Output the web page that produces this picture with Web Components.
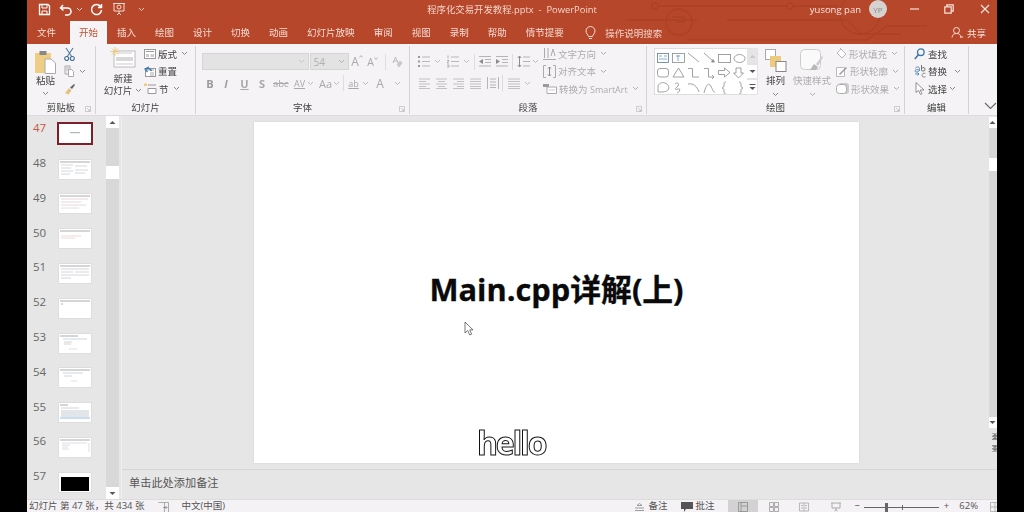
<!DOCTYPE html>
<html lang="zh-CN">
<head>
<meta charset="utf-8">
<title>PowerPoint</title>
<style>
  html, body { margin: 0; height: 100%; background: #000; overflow: hidden; }
  body { font-family: "Open Sans", "Noto Sans CJK SC", sans-serif; }
</style>
</head>
<body>
<ppt-app></ppt-app>

<script>
// name: [width, height, svg inner]
const ICONS = {
  chev: [7, 5, `<path d="M1 1l2.5 2.5L6 1" fill="none" stroke="currentColor"/>`],
  caret: [4, 3, `<path d="M.5 2.500L2 .5l1.500 2" fill="none" stroke="#aaa" stroke-width=".800"/>`],
  save: [13, 13, `<path d="M1.5 1.5h8.5l1.500 1.500v8.500h-10z" fill="none" stroke="#fff" stroke-width="1.300"/><path d="M4 2v3h5V2M4 11.500V8h5v3.500" fill="none" stroke="#fff"/>`],
  undo: [14, 13, `<path d="M4 2L1.500 5 4.500 7.500M2 5h6a3.500 3.500 0 0 1 1 7H6" fill="none" stroke="#fff" stroke-width="1.500"/>`],
  redo: [13, 13, `<path d="M10.500 3.500A5 5 0 1 0 11.500 7M11.500 1v3.500H8" fill="none" stroke="#fff" stroke-width="1.500"/>`],
  show: [14, 14, `<path d="M1 1.500h12M2 1.500v7.500h10V1.500M7 9v2M5 13l2-2 2 2" fill="none" stroke="#f4dcd4"/><circle cx="7" cy="5" r="2" fill="none" stroke="#f4dcd4"/>`],
  bulb: [11, 14, `<path d="M3.500 10.500C3 8.500 1 7.500 1 5a4.500 4.500 0 0 1 9 0c0 2.500-2 3.500-2.500 5.500zM4 12.500h3" fill="none" stroke="#f4dcd4"/>`],
  share: [12, 13, `<circle cx="5.500" cy="4.500" r="3" fill="none" stroke="#f4dcd4"/><path d="M1 11.500c.5-3 2-4 4.500-4s4 1 4.500 4M9 11h3" fill="none" stroke="#f4dcd4"/>`],
  min: [10, 10, `<path d="M0 5h9" stroke="#f6e3dc" stroke-width="1.200"/>`],
  restore: [10, 10, `<path d="M.8 2.800h6.400v6.400H.8zM2.800 2.500V.8h6.400v6.400H7.500" fill="none" stroke="#f6e3dc" stroke-width="1.200"/>`],
  close: [10, 10, `<path d="M1 1l8 8M9 1L1 9" stroke="#f6e3dc" stroke-width="1.200"/>`],
  paste: [23, 24, `<rect x="1" y="3" width="16" height="20" fill="#efcd83"/><rect x="5.500" y="1" width="7" height="4" fill="#888"/><path d="M11 9h6l4.500 4v10.500H11z" fill="#fff" stroke="#aaa"/>`],
  cut: [11, 14, `<path d="M2 1l6 9M9 1l-6 9" stroke="#54789a" stroke-width="1.100"/><circle cx="2.700" cy="11.500" r="2" fill="none" stroke="#3f6d95" stroke-width="1.100"/><circle cx="8.300" cy="11.500" r="2" fill="none" stroke="#3f6d95" stroke-width="1.100"/>`],
  copy: [11, 12, `<path d="M1 1h5v8H1z" fill="#eee" stroke="#aaa"/><path d="M4.500 4.500h3l2 2v5h-5z" fill="#fff" stroke="#aaa"/><path d="M2 3h3M2 5h2" stroke="#bbb"/>`],
  brush: [12, 12, `<path d="M1 10l4-5 2.500 2.500-3 4z" fill="#e4c27a"/><path d="M6 4.500L10 1l1 1-3 4z" fill="#666"/>`],
  newslide: [26, 21, `<rect x="4" y="4" width="21" height="16" fill="#fff" stroke="#bbb"/><rect x="6" y="10" width="17" height="4" fill="#d8d8d8"/><path d="M7 6h15M6 17h17" stroke="#ccc"/><path d="M5 0v9M.5 4.500h9M2 1.500l6 6M8 1.500l-6 6" stroke="#eccb7e"/>`],
  layout: [12, 10, `<rect x=".5" y=".5" width="11" height="9" fill="#fff" stroke="#999"/><path d="M2 2.500h8" stroke="#999"/><path d="M2 5h3v3H2zM6.500 5H10v3H6.500z" fill="#ccc"/>`],
  reset: [12, 11, `<rect x="1.500" y="2.500" width="10" height="8" fill="#fff" stroke="#999"/><path d="M3 4h7M6 7h4M6 9h4" stroke="#aaa"/><path d="M5 1L1 3l2.500 3M2 3c2.500-1 5 0 5.500 2" fill="none" stroke="#3a76a8" stroke-width="1.200"/>`],
  section: [13, 11, `<path d="M0 .5h3v2.500H0z" fill="#eccb7e"/><path d="M4 2h8M4 5.500h8v5H4z" fill="#fff" stroke="#999"/>`],
  clear: [11, 12, `<path d="M1 7L3.500 1 6 7M2 5h3" fill="none" stroke="#bbb"/><path d="M5 8l3-3.500 2.500 2.500L7.500 11H6z" fill="#c8c8c8"/>`],
  dialog: [6, 6, `<path d="M.5 5.500V.5h5v5zM2 2l3 3M5 3v2H3" fill="none" stroke="#bbb" stroke-width=".700"/>`],
  bullets: [12, 13, `<path d="M4 2h8M4 6.500h8M4 11h8" stroke="#b9b9b9"/><path d="M0 1h2v2H0zM0 5.500h2v2H0zM0 10h2v2H0z" fill="#999"/>`],
  numbers: [12, 13, `<path d="M4 2h8M4 6.500h8M4 11h8" stroke="#b9b9b9"/><path d="M1 .5v3M0 5.500h2L0 8h2M0 10h2v2H0" stroke="#999" fill="none" stroke-width=".700"/>`],
  outdent: [12, 11, `<path d="M0 .5h12M6 3.500h6M6 6.500h6M0 10h12" stroke="#b5b5b5"/><path d="M4 3v5L0 5.500z" fill="#8c8c8c"/>`],
  indent: [12, 11, `<path d="M0 .5h12M6 3.500h6M6 6.500h6M0 10h12" stroke="#b5b5b5"/><path d="M0 3v5l4-2.500z" fill="#8c8c8c"/>`],
  spacing: [13, 13, `<path d="M6 2h7M6 6.500h7M6 11h7" stroke="#b5b5b5"/><path d="M2.500 1v11M.8 3l1.700-2 1.700 2M.8 10l1.700 2 1.700-2" fill="none" stroke="#8c8c8c"/>`],
  aleft: [11, 11, `<path d="M0 1h11M0 3.500h7M0 6h11M0 8.500h7M0 10.500h11" stroke="#c2c2c2"/>`],
  acenter: [11, 11, `<path d="M0 1h11M2 3.500h7M0 6h11M2 8.500h7M0 10.500h11" stroke="#c2c2c2"/>`],
  aright: [11, 11, `<path d="M0 1h11M4 3.500h7M0 6h11M4 8.500h7M0 10.500h11" stroke="#c2c2c2"/>`],
  ajust: [11, 11, `<path d="M0 1h11M0 3.500h11M0 6h11M0 8.500h11M0 10.500h11" stroke="#c2c2c2"/>`],
  adist: [12, 12, `<path d="M.5 0v12M11.500 0v12M3 2h6M3 5h6M3 8h6M3 10.500h6" stroke="#b5b5b5"/>`],
  acols: [12, 11, `<path d="M0 1h12M0 3.500h12M0 6h12M0 8.500h12M0 10.500h12" stroke="#c2c2c2"/>`],
  textdir: [13, 14, `<path d="M1.500 1v10M5 1v10M0 12.500h13" stroke="#aaa"/><path d="M8 9l2-7 2 7" fill="none" stroke="#aaa"/>`],
  textalign: [13, 13, `<path d="M3 .5H.5v12H3M10 .5h2.500v12H10" fill="none" stroke="#aaa"/><path d="M6.500 2v9M5 3.500L6.500 2 8 3.500M5 9.500L6.500 11 8 9.500" fill="none" stroke="#888"/>`],
  smart: [14, 11, `<path d="M0 1h6v3H0z" fill="#999"/><path d="M4 4h9.500v6.500H4z" fill="#fff" stroke="#aaa"/><path d="M6 7h6" stroke="#ccc"/>`],
  arrange: [22, 23, `<rect x=".5" y=".5" width="10" height="10" fill="#fff" stroke="#aaa"/><rect x="5" y="7" width="11" height="11" fill="#eccb7e"/><rect x="11" y="12.500" width="10" height="10" fill="#fff" stroke="#888"/>`],
  quick: [24, 23, `<rect x=".5" y=".5" width="20" height="20" rx="4" fill="#fbfafb" stroke="#ccc"/><path d="M10 21l4-6 4 3-2 3z" fill="#b8b8b8"/><path d="M16 15l6-8 1 1-5 9z" fill="#ccc"/>`],
  fill: [11, 11, `<path d="M5 1l5 5-4 4-5-5z" fill="#fff" stroke="#bbb"/><path d="M4 0l2 2" stroke="#bbb"/>`],
  outline: [12, 11, `<path d="M.5 1.500h8v9h-8z" fill="#fff" stroke="#bbb"/><path d="M3 8l7-7 1 1-7 7z" fill="#999"/>`],
  effect: [13, 11, `<rect x="2" y="0" width="11" height="11" rx="3" fill="#ccc"/><rect x=".5" y="1.500" width="10" height="9" rx="3" fill="#fff" stroke="#aaa"/>`],
  find: [11, 12, `<circle cx="6.800" cy="4.200" r="3.300" fill="none" stroke="#3a76a8" stroke-width="1.300"/><path d="M4.400 6.800L.8 11" stroke="#3a76a8" stroke-width="1.500"/>`],
  replace: [12, 13, `<path d="M5.500 5.500v-2c0-2-4-2-4 0M5.500 5.500c-1.500-1.500-4.500-1-4.500 .5 0 1.500 3 1.500 4.500-.5" fill="none" stroke="#3a76a8" stroke-width=".800"/><path d="M7.500 0v5.500c2 1.200 3.500.5 3.500-1.300s-1.500-2-3.500-1" fill="none" stroke="#555" stroke-width=".800"/><path d="M1 9h4M3.500 7.500L5 9 3.500 10.500" fill="none" stroke="#3a76a8" stroke-width=".800"/><path d="M11.500 8.500c-2-1-3.500 0-3.500 1.700s1.500 2.500 3.500 1.500" fill="none" stroke="#777" stroke-width=".800"/>`],
  select: [10, 13, `<path d="M1 .5v10l2.500-2 2 4 1.500-.800-2-3.700H9z" fill="#fff" stroke="#777" stroke-width=".800"/>`],
  collapse: [13, 8, `<path d="M1 1l5.500 5.500L12 1" fill="none" stroke="#666" stroke-width="1.100"/>`],
  gallery: [92, 45, `<g fill="none" stroke="#8a8a8a" stroke-width=".800">
    <rect x="2.500" y="4.500" width="11" height="9" stroke="#5b7c99"/><path d="M4 7h3M9 7h3M4 10h8" stroke="#5b9bd5"/>
    <rect x="17.500" y="4.500" width="12" height="9"/><path d="M23 6v6M21 7h4" stroke="#5b9bd5"/>
    <path d="M33 4l11 9M49 4l10 9"/><path d="M58 10.500l1.500 2.500-3 0z" fill="#8a8a8a"/>
    <rect x="63.500" y="5.500" width="12" height="8"/><ellipse cx="84.500" cy="9.500" rx="5.500" ry="4"/>
    <rect x="2.500" y="19.500" width="11" height="8.500" rx="2.500"/><path d="M18 28l5.500-9 5.500 9z"/>
    <path d="M33 19.500h4.500v8.500H44M49 19.500h4.500v8.500H59M57 26l2 2-2 2"/>
    <path d="M63.500 21.500h6V19l5.500 4.500L69.500 28v-2.500h-6zM81 19h5v5h2.500l-5 5-5-5H81z"/>
    <path d="M3 43v-5c0-4 4-5 7-4 3 1 5 4 3 7-1 2-6 2-10 2zM20 35c3-3 5 1 2 3s-2 3 1 2 2 3-1 4"/>
    <path d="M33 35c5-1 9 2 11 8M49 44c2-8 4-10 6-8s3 8 5 7"/>
    <path d="M71 33c-2 0-2 1-2 3s0 2-2 3c2 1 2 1 2 3s0 3 2 3M84 33c2 0 2 1 2 3s0 2 2 3c-2 1-2 1-2 3s0 3-2 3"/>
  </g>`],
  gup: [7, 5, `<path d="M.5 4L3.500 1 6.500 4z" fill="#c8c8c8"/>`],
  gup2: [7, 5, `<path d="M.5 4L3.500 1 6.500 4z" fill="#555"/>`],
  gdown: [7, 5, `<path d="M.5 1l3 3 3-3z" fill="#555"/>`],
  gmore: [7, 7, `<path d="M.5 .5h6" stroke="#555"/><path d="M.5 3l3 3 3-3z" fill="#555"/>`],
  prev: [6, 7, `<path d="M0 .5h6M3 1L0 3.500h6zM3 4L0 6.500h6z" fill="#777" stroke="#777" stroke-width=".500"/>`],
  next: [6, 7, `<path d="M0 6.500h6M3 6L0 3.500h6zM3 3L0 .5h6z" fill="#777" stroke="#777" stroke-width=".500"/>`],
  note: [9, 8, `<path d="M4.500 .5L7 2.500H2zM0 5h9M0 7.500h9" fill="none" stroke="#888" stroke-width=".800"/>`],
  comment: [12, 10, `<path d="M0 0h12v7H5L3 10V7H0z" fill="#555"/>`],
  vnormal: [10, 10, `<path d="M.5 .5h9v9h-9zM3 .5v9M3 4h6.500" fill="none" stroke="#8a8a8a" stroke-width=".800"/>`],
  vsorter: [10, 10, `<path d="M.5 .5h4v4h-4zM5.500 .5h4v4h-4zM.5 5.500h4v4h-4zM5.500 5.500h4v4h-4z" fill="none" stroke="#999" stroke-width=".800"/>`],
  vread: [10, 10, `<path d="M.5 1h9v8h-9zM5 1v8M2 3.500h2M2 6h2M6 3.500h2M6 6h2" fill="none" stroke="#aaa" stroke-width=".800"/>`],
  vshow: [10, 10, `<path d="M0 1h10M1 1v5h8V1M5 6v2M3.500 9L5 8l1.500 1" fill="none" stroke="#999" stroke-width=".800"/>`],
  fit: [10, 10, `<path d="M.5 .5h9v9h-9zM.5 5h9M5 .5v9" fill="none" stroke="#aaa" stroke-width=".800"/>`],
  lang: [11, 11, `<path d="M.5 .5h6v10h-6M6.500 .5h4v10h-4" fill="none" stroke="#999" stroke-width=".800"/><path d="M5 5.500h4M7.500 4L9 5.500 7.500 7" fill="none" stroke="#888" stroke-width=".800"/>`],
  cursor: [10, 15, `<path d="M1 1v11l2.700-2.500 2 4.500 2-.900-2-4.200H9z" fill="#fff" stroke="#555" stroke-width=".800"/>`]
};

class PptIcon extends HTMLElement {
  connectedCallback() {
    if (this.shadowRoot) return;
    const root = this.attachShadow({ mode: 'open' });
    const [w, h, body] = ICONS[this.getAttribute('name')];
    root.innerHTML = `<style>:host{display:inline-flex;flex:none;line-height:0}</style>
      <svg width="${w}" height="${h}" viewBox="0 0 ${w} ${h}">${body}</svg>`;
  }
}

class PptHeader extends HTMLElement {
  constructor() {
    super();
    this.attachShadow({ mode: 'open' }).innerHTML = `
      <style>
        :host { display: block; height: 44px; background: #b7472a; color: #f7e6e0; font-size: 9.500px; position: relative; overflow: hidden; }
        .art { position: absolute; left: 600px; top: 0; }
        .title { position: relative; display: grid; grid-template-columns: 1fr auto 1fr; height: 15px; margin-bottom: 6px; align-items: center; }
        .qa { display: flex; align-items: center; padding-left: 11px; color: #f0c9bc; }
        .doc { color: #f3d6cc; white-space: pre; font-size: 9.400px; }
        .win { display: flex; align-items: center; justify-content: flex-end; padding-right: 7px; }
        .user { margin-right: 8px; }
        .avatar { width: 18px; height: 18px; border-radius: 50%; background: #d6d2d0; color: #8a8a8a; font-size: 8px; display: flex; align-items: center; justify-content: center; margin-right: 23px; flex: none; }
        .tabs { position: relative; display: flex; height: 23px; align-items: stretch; }
        .tab { padding: 0 9.500px; line-height: 23px; white-space: nowrap; color: #f4dcd4; }
        .tab.file { padding: 0 14px 0 10px; }
        .tab.on { background: #f5f3f5; color: #c1532f; padding: 0 9px; }
        .tab.on + .tab { padding-left: 10px; }
        .tell { display: flex; align-items: center; gap: 9px; padding-left: 12px; color: #f0cfc4; }
        .sh { margin-left: auto; display: flex; align-items: center; gap: 4px; padding-right: 11px; }
      </style>
      <svg class="art" width="300" height="44" fill="none" stroke="#ac4124" stroke-width="1.300">
        <circle cx="28" cy="6" r="3"/><circle cx="163" cy="6" r="3"/>
        <path d="M31 6h129M166 6h45M0 20h70M100 20h120l14 14h40M60 40h180l20-14h40"/>
        <circle cx="52" cy="22" r="13"/><path d="M45 17h12v5h-8"/><circle cx="233" cy="14" r="20"/>
      </svg>
      <div class="title">
        <div class="qa">
          <ppt-icon name="save" style="margin-right:8px"></ppt-icon>
          <ppt-icon name="undo" style="margin-right:3px"></ppt-icon>
          <ppt-icon name="chev" style="margin-right:7px"></ppt-icon>
          <ppt-icon name="redo" style="margin-right:9px"></ppt-icon>
          <ppt-icon name="show" style="margin-right:12px"></ppt-icon>
          <ppt-icon name="chev"></ppt-icon>
        </div>
        <div class="doc">程序化交易开发教程.pptx  -  PowerPoint</div>
        <div class="win">
          <span class="user">yusong pan</span><span class="avatar">YP</span>
          <ppt-icon name="min" style="margin-right:24px"></ppt-icon><ppt-icon name="restore" style="margin-right:26px"></ppt-icon><ppt-icon name="close"></ppt-icon>
        </div>
      </div>
      <div class="tabs">
        <span class="tab file">文件</span><span class="tab on">开始</span><span class="tab">插入</span><span class="tab">绘图</span><span class="tab">设计</span><span class="tab">切换</span><span class="tab">动画</span><span class="tab">幻灯片放映</span><span class="tab">审阅</span><span class="tab">视图</span><span class="tab">录制</span><span class="tab">帮助</span><span class="tab">情节提要</span>
        <span class="tell"><ppt-icon name="bulb"></ppt-icon>操作说明搜索</span>
        <span class="sh"><ppt-icon name="share"></ppt-icon>共享</span>
      </div>`;
  }
}

class RbGroup extends HTMLElement {
  constructor() {
    super();
    this.attachShadow({ mode: 'open' }).innerHTML = `
      <style>
        :host { display: flex; flex-direction: column; flex: none; box-sizing: border-box; height: 68px; margin-top: 2px; border-right: 1px solid #d4d2d4; position: relative; }
        .body { flex: 1; display: flex; min-height: 0; }
        .label { height: 12px; line-height: 12px; text-align: center; font-size: 9.500px; color: #444; }
        .dlg { position: absolute; right: 4px; bottom: 2px; }
      </style>
      <div class="body"><slot></slot></div>
      <div class="label"></div>`;
  }
  connectedCallback() {
    this.shadowRoot.querySelector('.label').textContent = this.getAttribute('label');
    this.style.width = this.getAttribute('w') + 'px';
    if (this.hasAttribute('dlg') && !this.shadowRoot.querySelector('.dlg')) {
      const d = document.createElement('ppt-icon');
      d.setAttribute('name', 'dialog');
      d.className = 'dlg';
      this.shadowRoot.append(d);
    }
  }
}

class PptRibbon extends HTMLElement {
  constructor() {
    super();
    this.attachShadow({ mode: 'open' }).innerHTML = `
      <style>
        :host { display: flex; height: 72px; background: #f5f3f5; border-bottom: 1px solid #dcdadc; box-sizing: border-box; font-size: 9.500px; color: #444; position: relative; }
        .big { display: flex; flex-direction: column; align-items: center; flex: none; line-height: 11.500px; text-align: center; }
        .stack { display: grid; grid-auto-rows: 17.500px; align-items: center; flex: none; margin-top: -1px; }
        .it { display: flex; align-items: center; gap: 2px; white-space: nowrap; }
        .off { color: #adadad; }
        .row { display: flex; align-items: center; height: 17px; }
        .col { display: flex; flex-direction: column; flex: none; }
        .sep { width: 1px; height: 16px; background: #dedcde; flex: none; }
        .combo { height: 16.500px; background: #e4e3e4; border: 1px solid #d6d5d6; box-sizing: border-box; display: flex; align-items: center; justify-content: flex-end; padding-right: 3px; flex: none; color: #c6c6c6; }
        .size { justify-content: space-between; padding-left: 3px; color: #b0b0b0; font-size: 10px; }
        .t { flex: none; color: #a9a9a9; text-align: center; }
        .t ppt-icon { vertical-align: top; margin-top: 2px; }
        .b { font-weight: 700; font-size: 11px; }
        .gallery { width: 94px; height: 47px; background: #fff; border: 1px solid #dedcde; box-sizing: border-box; flex: none; }
        .gscroll { width: 11px; height: 47px; display: grid; grid-template-rows: 16px 15px 16px; flex: none; margin-left: -1px; }
        .gscroll span { display: flex; align-items: center; justify-content: center; background: #fff; border: 1px solid #e4e2e4; border-left: 0; box-sizing: border-box; }
        .gscroll span:first-child { background: #e6e5e6; }
        .fold { position: absolute; right: 0; bottom: 5px; }
        .sa { font-size: 9px; }
      </style>

      <rb-group label="剪贴板" w="69" dlg>
        <div class="big" style="width:37px;padding-top:4px">
          <ppt-icon name="paste"></ppt-icon>
          <span style="margin-top:1px">粘贴</span>
          <ppt-icon name="chev" style="margin-top:4px;color:#888"></ppt-icon>
        </div>
        <div class="stack" style="width:31px">
          <ppt-icon name="cut"></ppt-icon>
          <span class="it"><ppt-icon name="copy"></ppt-icon><ppt-icon name="chev" style="margin-left:2px;color:#888"></ppt-icon></span>
          <ppt-icon name="brush"></ppt-icon>
        </div>
      </rb-group>

      <rb-group label="幻灯片" w="100">
        <div class="big" style="width:48px;padding-top:1px;margin-left:3px">
          <ppt-icon name="newslide"></ppt-icon>
          <span style="margin-top:5px">新建</span>
          <span class="it" style="gap:3px">幻灯片<ppt-icon name="chev" style="color:#888"></ppt-icon></span>
        </div>
        <div class="stack" style="margin-left:-3px">
          <span class="it"><ppt-icon name="layout"></ppt-icon>版式<ppt-icon name="chev" style="margin-left:2px;color:#888"></ppt-icon></span>
          <span class="it"><ppt-icon name="reset"></ppt-icon>重置</span>
          <span class="it"><ppt-icon name="section"></ppt-icon>节<ppt-icon name="chev" style="margin-left:2px;color:#888"></ppt-icon></span>
        </div>
      </rb-group>

      <rb-group label="字体" w="214" dlg>
        <div class="col" style="padding:7px 0 0 6px">
          <div class="row">
            <div class="combo" style="width:107px"><ppt-icon name="chev"></ppt-icon></div>
            <div class="combo size" style="width:39px;margin-left:0.500px">54<ppt-icon name="chev"></ppt-icon></div>
            <span class="t" style="width:15px;margin-left:1px;font-size:12px">A<ppt-icon name="caret"></ppt-icon></span>
            <span class="t" style="width:16px;font-size:10.500px">A<ppt-icon name="caret" style="transform:scaleY(-1)"></ppt-icon></span>
            <span class="sep" style="margin:0 6px 0 4px"></span>
            <ppt-icon name="clear"></ppt-icon>
          </div>
          <div class="row" style="margin-top:5px;height:16px">
            <span class="t b" style="width:8px;margin-left:4px;color:#9a9a9a">B</span>
            <span class="t" style="width:8px;margin-left:8px;font-style:italic;font-weight:700;font-size:11px;color:#a0a0a0">I</span>
            <span class="t" style="width:9px;margin-left:10px;text-decoration:underline;font-size:11px;font-weight:700">U</span>
            <span class="t b" style="width:8px;margin-left:9px">S</span>
            <span class="t" style="width:14px;margin-left:7px;text-decoration:line-through;font-size:9.500px">abc</span>
            <span class="t" style="width:13px;margin-left:6px;font-size:9px;text-decoration:underline">AV</span>
            <ppt-icon name="chev" style="margin-left:1px;color:#bbb"></ppt-icon>
            <span class="t" style="width:15px;margin-left:4px;font-size:11px">Aa</span>
            <ppt-icon name="chev" style="color:#bbb"></ppt-icon>
            <span class="sep" style="margin:0 3px"></span>
            <span class="t" style="width:13px;text-decoration:underline;font-size:9px">ab</span>
            <ppt-icon name="chev" style="margin-left:2px;color:#bbb"></ppt-icon>
            <span class="t" style="width:12px;margin-left:5px;font-size:12px">A</span>
            <ppt-icon name="chev" style="margin-left:8px;color:#bbb"></ppt-icon>
          </div>
        </div>
      </rb-group>

      <rb-group label="段落" w="237" dlg>
        <div class="col" style="padding:7px 0 0 8px;width:125px;box-sizing:border-box">
          <div class="row">
            <ppt-icon name="bullets"></ppt-icon><ppt-icon name="chev" style="margin:0 6px 0 4px;color:#bbb"></ppt-icon>
            <ppt-icon name="numbers"></ppt-icon><ppt-icon name="chev" style="margin:0 4px;color:#bbb"></ppt-icon>
            <span class="sep" style="margin-right:4px"></span>
            <ppt-icon name="outdent"></ppt-icon><ppt-icon name="indent" style="margin-left:5px"></ppt-icon>
            <span class="sep" style="margin:0 4px"></span>
            <ppt-icon name="spacing"></ppt-icon><ppt-icon name="chev" style="margin-left:2px;color:#bbb"></ppt-icon>
          </div>
          <div class="row" style="margin-top:5px;height:16px">
            <ppt-icon name="aleft" style="margin-left:1px"></ppt-icon><ppt-icon name="acenter" style="margin-left:6px"></ppt-icon>
            <ppt-icon name="aright" style="margin-left:6px"></ppt-icon><ppt-icon name="ajust" style="margin-left:6px"></ppt-icon>
            <ppt-icon name="adist" style="margin-left:6px"></ppt-icon>
            <span class="sep" style="margin:0 5px 0 3px"></span>
            <ppt-icon name="acols"></ppt-icon><ppt-icon name="chev" style="margin-left:4px;color:#bbb"></ppt-icon>
          </div>
        </div>
        <div class="stack off" style="padding-left:8px">
          <span class="it"><ppt-icon name="textdir"></ppt-icon>文字方向<ppt-icon name="chev" style="margin-left:2px"></ppt-icon></span>
          <span class="it"><ppt-icon name="textalign"></ppt-icon>对齐文本<ppt-icon name="chev" style="margin-left:2px"></ppt-icon></span>
          <span class="it"><ppt-icon name="smart"></ppt-icon><span>转换为 <span class="sa">SmartArt</span></span><ppt-icon name="chev" style="margin-left:2px"></ppt-icon></span>
        </div>
      </rb-group>

      <rb-group label="绘图" w="258" dlg>
        <div class="row" style="height:47px;padding:2px 0 0 7px;align-items:flex-start;flex:none">
          <div class="gallery"><ppt-icon name="gallery"></ppt-icon></div>
          <div class="gscroll"><span><ppt-icon name="gup"></ppt-icon></span><span><ppt-icon name="gdown"></ppt-icon></span><span><ppt-icon name="gmore"></ppt-icon></span></div>
        </div>
        <div class="big" style="width:31px;margin-left:2px;padding-top:3px">
          <ppt-icon name="arrange"></ppt-icon>
          <span style="margin-top:3px">排列</span>
          <ppt-icon name="chev" style="margin-top:5px;color:#888"></ppt-icon>
        </div>
        <div class="big off" style="width:42px;padding-top:3px">
          <ppt-icon name="quick"></ppt-icon>
          <span style="margin-top:3px;white-space:nowrap">快速样式</span>
          <ppt-icon name="chev" style="margin-top:5px"></ppt-icon>
        </div>
        <div class="stack off" style="padding-left:3px">
          <span class="it"><ppt-icon name="fill"></ppt-icon>形状填充<ppt-icon name="chev" style="margin-left:2px"></ppt-icon></span>
          <span class="it"><ppt-icon name="outline"></ppt-icon>形状轮廓<ppt-icon name="chev" style="margin-left:2px"></ppt-icon></span>
          <span class="it"><ppt-icon name="effect"></ppt-icon>形状效果<ppt-icon name="chev" style="margin-left:2px"></ppt-icon></span>
        </div>
      </rb-group>

      <rb-group label="编辑" w="64">
        <div class="stack" style="padding-left:9px">
          <span class="it"><ppt-icon name="find" style="margin-right:1px"></ppt-icon>查找</span>
          <span class="it"><ppt-icon name="replace"></ppt-icon>替换<ppt-icon name="chev" style="margin-left:5px;color:#888"></ppt-icon></span>
          <span class="it"><ppt-icon name="select" style="margin-left:1px;margin-right:1px"></ppt-icon>选择<ppt-icon name="chev" style="color:#888"></ppt-icon></span>
        </div>
      </rb-group>
      <ppt-icon class="fold" name="collapse"></ppt-icon>`;
  }
}

// slide thumbnail, kind picks the small drawing inside
const THUMBS = {
  title: `<path d="M12 10.500h12" stroke="#9aa6b0" stroke-width="1.200"/>`,
  table: `<path d="M1 2h30" stroke="#888" stroke-width=".7"/><path d="M2 5h12M2 8h10M2 11h12M2 14h9M16 6h12M16 10h13M16 13h10" stroke="#c8ccd6" stroke-width=".8"/>`,
  red: `<path d="M1 2h30" stroke="#888" stroke-width=".7"/><path d="M2 5h27M2 8h20M2 11h25" stroke="#e0ccd2" stroke-width=".8"/><path d="M2 14h18" stroke="#d8d8d8" stroke-width=".8"/>`,
  text: `<path d="M1 2h30" stroke="#888" stroke-width=".7"/><path d="M2 7h20M2 9h14" stroke="#ecd0d0" stroke-width=".8"/>`,
  mix: `<path d="M1 2h30" stroke="#888" stroke-width=".7"/><path d="M2 5h28M2 8h12M2 11h14M2 14h10M16 8h14M16 11h14" stroke="#ccc8d2" stroke-width=".8"/>`,
  plain: `<path d="M1 2h30" stroke="#888" stroke-width=".7"/><path d="M2 5h2" stroke="#8fb9da"/>`,
  bullets: `<path d="M1 2h18" stroke="#888" stroke-width=".7"/><path d="M4 5h24M5 8h8" stroke="#bccbdb" stroke-width=".8"/><path d="M5 10h7" stroke="#e8bea8" stroke-width=".8"/><path d="M10 15h8" stroke="#d8d8d8" stroke-width=".8"/>`,
  code: `<path d="M1 2h30" stroke="#888" stroke-width=".7"/><path d="M4 5h20M5 8h8" stroke="#bccbdb" stroke-width=".8"/><path d="M12 13h6" stroke="#d8d8d8" stroke-width=".8"/>`,
  shot: `<path d="M1 2h8" stroke="#888" stroke-width=".7"/><path d="M2 5h18" stroke="#c4c4d8" stroke-width=".8"/><rect x="2" y="7" width="28" height="7" fill="#e2e6ea"/><path d="M1 15h30" stroke="#a8c8e0" stroke-width="1.200"/>`,
  list: `<path d="M1 2h30" stroke="#888" stroke-width=".7"/><path d="M3 5h25M3 7h8M3 9h6M3 11h7M30 5v9" stroke="#d4d6e0" stroke-width=".8"/>`,
  black: `<rect x="2" y="4" width="28" height="14" fill="#000"/>`
};

class PptThumb extends HTMLElement {
  connectedCallback() {
    if (this.shadowRoot) return;
    const on = this.hasAttribute('on');
    this.attachShadow({ mode: 'open' }).innerHTML = `
      <style>
        :host { display: flex; align-items: center; height: 34.800px; flex: none; }
        .n { width: 30px; padding-left: 6px; padding-bottom: 11px; box-sizing: border-box; font-size: 11.500px; color: ${on ? '#c5593f' : '#666'}; flex: none; line-height: 1; }
        .p { flex: none; background: #fff; display: block; box-sizing: border-box; }
        .p.cur { width: 36px; height: 23px; border: 2px solid #7b1f2a; }
        .p.reg { width: 32px; height: 19px; margin-left: 1.500px; box-shadow: 0 0 0 .5px #d4d4d4; margin-top: 2px; }
      </style>
      <span class="n">${this.getAttribute('n')}</span>
      <svg class="p ${on ? 'cur' : 'reg'}" viewBox="${on ? '0 0 36 23' : '0 0 32 19'}">${THUMBS[this.getAttribute('kind')]}</svg>`;
  }
}

class PptThumbs extends HTMLElement {
  constructor() {
    super();
    this.attachShadow({ mode: 'open' }).innerHTML = `
      <style>
        :host { display: flex; width: 95px; flex: none; background: #e6e6e6; border-right: 1px solid #eeeeee; box-sizing: border-box; }
        .list { width: 79px; height: 383px; overflow: hidden; display: flex; flex-direction: column; flex: none; }
        .bar { width: 13px; background: #d9d8d9; display: flex; flex-direction: column; flex: none; }
        .btn { height: 12px; background: #fff; display: flex; align-items: center; justify-content: center; flex: none; }
        .thumb { height: 13px; background: #fff; margin-top: 38px; flex: none; }
        .sp { flex: 1; }
      </style>
      <div class="list">
        <ppt-thumb n="47" kind="title" on></ppt-thumb>
        <ppt-thumb n="48" kind="table"></ppt-thumb>
        <ppt-thumb n="49" kind="red"></ppt-thumb>
        <ppt-thumb n="50" kind="text"></ppt-thumb>
        <ppt-thumb n="51" kind="mix"></ppt-thumb>
        <ppt-thumb n="52" kind="plain"></ppt-thumb>
        <ppt-thumb n="53" kind="bullets"></ppt-thumb>
        <ppt-thumb n="54" kind="code"></ppt-thumb>
        <ppt-thumb n="55" kind="shot"></ppt-thumb>
        <ppt-thumb n="56" kind="list"></ppt-thumb>
        <ppt-thumb n="57" kind="black"></ppt-thumb>
      </div>
      <div class="bar">
        <div class="btn"><ppt-icon name="gup2"></ppt-icon></div>
        <div class="thumb"></div><div class="sp"></div>
        <div class="btn"><ppt-icon name="gdown"></ppt-icon></div>
      </div>`;
  }
}

class PptSlide extends HTMLElement {
  constructor() {
    super();
    this.attachShadow({ mode: 'open' }).innerHTML = `
      <style>
        :host { display: flex; align-items: center; justify-content: center; flex: none; width: 605px; height: 341px; margin-top: 6px; background: #fff; box-shadow: 0 0 2px #cfcfcf; }
        .h { font-size: 30.800px; font-weight: 700; color: #0a0a0a; padding-bottom: 10px; white-space: nowrap; -webkit-text-stroke: .3px #0a0a0a; font-family: "Open Sans", "Noto Sans CJK SC", sans-serif; }
      </style>
      <div class="h">Main.cpp详解(上)</div>`;
  }
}

class PptWorkspace extends HTMLElement {
  constructor() {
    super();
    this.attachShadow({ mode: 'open' }).innerHTML = `
      <style>
        :host { display: flex; height: 383px; background: #e6e6e6; color: #555; }
        .main { flex: 1; display: flex; flex-direction: column; min-width: 0; }
        .edit { height: 354px; display: flex; padding-left: 132px; border-bottom: 1px solid #d6d6d6; box-sizing: border-box; }
        .notes { flex: 1; padding: 4px 0 0 7px; font-size: 11.200px; line-height: 18px; }
        .side { margin-left: auto; width: 8px; flex: none; display: flex; flex-direction: column; align-items: flex-start; padding-top: 1px; }
        .vbar { width: 8px; height: 311px; background: #d9d8d9; display: flex; flex-direction: column; flex: none; overflow: hidden; }
        .btn { height: 11px; background: #fff; flex: none; display: flex; align-items: center; }
        .th { height: 13px; background: #fff; margin-top: 30px; flex: none; }
        .sp { flex: 1; }
        .step { margin: 5px 0 0 3px; }
      </style>
      <ppt-thumbs></ppt-thumbs>
      <div class="main">
        <div class="edit">
          <ppt-slide></ppt-slide>
          <div class="side">
            <div class="vbar">
              <div class="btn"><ppt-icon name="gup2"></ppt-icon></div>
              <div class="th"></div><div class="sp"></div>
              <div class="btn"><ppt-icon name="gdown"></ppt-icon></div>
            </div>
            <ppt-icon class="step" name="prev"></ppt-icon>
            <ppt-icon class="step" name="next"></ppt-icon>
          </div>
        </div>
        <div class="notes">单击此处添加备注</div>
      </div>`;
  }
}

class PptStatus extends HTMLElement {
  constructor() {
    super();
    this.attachShadow({ mode: 'open' }).innerHTML = `
      <style>
        :host { display: flex; align-items: flex-start; height: 12px; background: #f4f2f4; color: #555; font-size: 9.500px; line-height: 12px; white-space: nowrap; padding-left: 2px; border-top: 1px solid #dcdcdc; }
        .ic { display: flex; align-items: center; height: 12px; padding-top: 2px; box-sizing: border-box; flex: none; }
        .active { width: 30px; height: 12px; background: #d2d2d2; display: flex; justify-content: center; padding-top: 2px; box-sizing: border-box; margin-left: 14px; flex: none; }
        .slider { width: 75px; height: 1px; background: #666; margin: 7px 5px 0 4px; position: relative; flex: none; }
        .slider i { position: absolute; left: 21px; top: -4px; width: 3px; height: 9px; background: #666; }
        .slider b { position: absolute; left: 38px; top: -2px; width: 1px; height: 5px; background: #666; }
      </style>
      <span>幻灯片 第 47 张，共 434 张</span>
      <span class="ic" style="margin-left:13px"><ppt-icon name="lang"></ppt-icon></span>
      <span style="margin-left:13px">中文(中国)</span>
      <span style="flex:1"></span>
      <span class="ic"><ppt-icon name="note"></ppt-icon></span>
      <span style="margin-left:4px">备注</span>
      <span class="ic" style="margin-left:14px"><ppt-icon name="comment"></ppt-icon></span>
      <span style="margin-left:2px">批注</span>
      <span class="active"><ppt-icon name="vnormal"></ppt-icon></span>
      <span class="ic" style="margin-left:11px"><ppt-icon name="vsorter"></ppt-icon></span>
      <span class="ic" style="margin-left:20px"><ppt-icon name="vread"></ppt-icon></span>
      <span class="ic" style="margin-left:22px"><ppt-icon name="vshow"></ppt-icon></span>
      <span style="margin-left:13px">−</span>
      <span class="slider"><i></i><b></b></span>
      <span>+</span>
      <span style="margin-left:10px">62%</span>
      <span class="ic" style="margin:0 -3px 0 12px"><ppt-icon name="fit"></ppt-icon></span>`;
  }
}

class PptApp extends HTMLElement {
  constructor() {
    super();
    this.attachShadow({ mode: 'open' }).innerHTML = `
      <style>
        :host { display: block; width: 1024px; height: 512px; overflow: hidden; background: #000; position: relative; font-family: "Open Sans", "Noto Sans CJK SC", sans-serif; }
        .win { width: 970px; height: 512px; margin-left: 27px; filter: blur(.3px); overflow: hidden; }
        .hello { position: absolute; left: 477px; top: 421px; font-size: 32px; font-weight: 700; line-height: 44px; letter-spacing: -2.200px; color: #fff; -webkit-text-stroke: 1px #111; font-family: "Open Sans", sans-serif; }
        .cursor { position: absolute; left: 464px; top: 321px; }
      </style>
      <div class="win">
        <ppt-header></ppt-header>
        <ppt-ribbon></ppt-ribbon>
        <ppt-workspace></ppt-workspace>
        <ppt-status></ppt-status>
      </div>
      <ppt-icon class="cursor" name="cursor"></ppt-icon>
      <div class="hello">hello</div>`;
  }
}

customElements.define('ppt-icon', PptIcon);
customElements.define('ppt-header', PptHeader);
customElements.define('rb-group', RbGroup);
customElements.define('ppt-ribbon', PptRibbon);
customElements.define('ppt-thumb', PptThumb);
customElements.define('ppt-thumbs', PptThumbs);
customElements.define('ppt-slide', PptSlide);
customElements.define('ppt-workspace', PptWorkspace);
customElements.define('ppt-status', PptStatus);
customElements.define('ppt-app', PptApp);
</script>
</body>
</html>
